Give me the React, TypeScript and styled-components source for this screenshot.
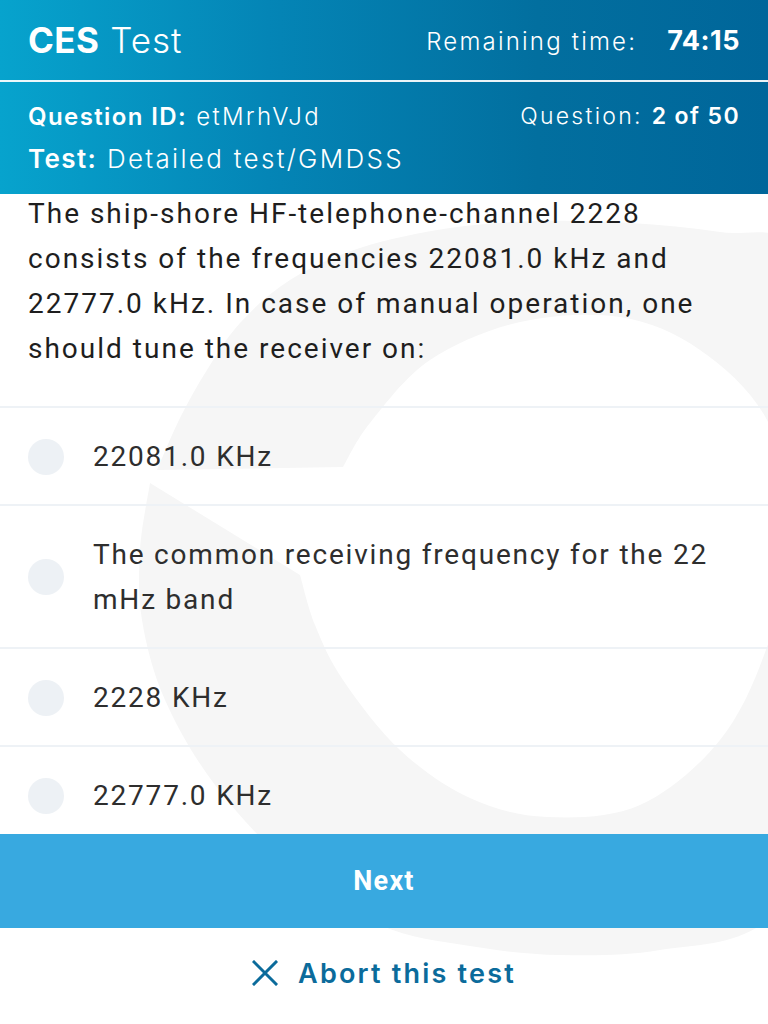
import styled, { createGlobalStyle } from 'styled-components';

const GlobalStyle = createGlobalStyle`
  html, body {
    margin: 0;
    padding: 0;
    background: #ffffff;
  }
  #root {
    height: 100vh;
  }
  * {
    box-sizing: border-box;
  }
`;

const Page = styled.div`
  position: relative;
  display: flex;
  flex-direction: column;
  width: 768px;
  height: 1024px;
  overflow: hidden;
  background: #ffffff;
  font-family: Roboto, "Liberation Sans", sans-serif;
`;

const Watermark = styled.svg`
  position: absolute;
  top: 0;
  left: 0;
  pointer-events: none;
`;

const TopBar = styled.header`
  position: relative;
  z-index: 1;
  background: linear-gradient(90deg, #07a3cd 0%, #0485b6 35%, #026f9f 70%, #00669a 100%);
  color: #ffffff;
  font-family: Inter, "Open Sans", sans-serif;
`;

const TitleRow = styled.div`
  display: flex;
  align-items: center;
  justify-content: space-between;
  height: 82px;
  padding: 0 28px;
  border-bottom: 2px solid rgba(255, 255, 255, 0.92);
`;

const Title = styled.h1`
  margin: 0;
  font-size: 35px;
  font-weight: 300;
  letter-spacing: 1px;

  b {
    font-weight: 700;
    letter-spacing: 0.4px;
  }
`;

const Timer = styled.div`
  display: flex;
  align-items: baseline;
  gap: 30px;
  font-size: 24px;
  font-weight: 300;
  letter-spacing: 2.2px;

  b {
    font-size: 27px;
    font-weight: 700;
    letter-spacing: 0.5px;
  }
`;

const InfoBlock = styled.div`
  display: flex;
  flex-direction: column;
  padding: 13px 28px 15px;
`;

const InfoRow = styled.div`
  display: flex;
  align-items: center;
  justify-content: space-between;
  height: 42px;
`;

const InfoText = styled.span<{ $size: number }>`
  font-size: ${(p) => p.$size}px;
  font-weight: 300;
  letter-spacing: 2.3px;

  b {
    font-weight: 600;
    letter-spacing: 1.4px;
  }
`;

const Body = styled.main`
  position: relative;
  z-index: 1;
  flex: 1;
  overflow: hidden;
`;

const Question = styled.p`
  margin: -3px 0 0;
  padding: 0 28px 35px;
  font-size: 28px;
  line-height: 45px;
  letter-spacing: 2px;
  color: #1e1e1e;
`;

const Option = styled.label`
  display: flex;
  align-items: center;
  gap: 29px;
  padding: 26px 28px 25px;
  border-top: 2px solid #eef2f6;
  cursor: pointer;
`;

const Radio = styled.span`
  flex: none;
  width: 36px;
  height: 36px;
  border-radius: 50%;
  background: #edf1f5;
`;

const OptionText = styled.span`
  font-size: 28px;
  line-height: 45px;
  letter-spacing: 1.8px;
  color: #2e2e2e;
`;

const NextButton = styled.button`
  position: relative;
  z-index: 1;
  flex: none;
  height: 94px;
  border: none;
  background: #38a9e0;
  color: #ffffff;
  font-family: Roboto, "Liberation Sans", sans-serif;
  font-size: 27px;
  font-weight: 700;
  letter-spacing: 1.2px;
  cursor: pointer;
`;

const AbortButton = styled.button`
  position: relative;
  z-index: 1;
  flex: none;
  display: flex;
  align-items: center;
  justify-content: center;
  gap: 20px;
  height: 96px;
  padding: 0 0 6px;
  border: none;
  background: transparent;
  color: #0b6b9b;
  font-family: Inter, "Open Sans", sans-serif;
  font-size: 27px;
  font-weight: 600;
  letter-spacing: 2.2px;
  cursor: pointer;
`;

type Pt = [number, number];

// catmull-rom through the points, as cubic segments
const smooth = (pts: Pt[]) => {
  let d = '';
  for (let i = 0; i < pts.length - 1; i++) {
    const p0 = pts[i - 1] || pts[i];
    const p1 = pts[i];
    const p2 = pts[i + 1];
    const p3 = pts[i + 2] || p2;
    const c1 = [p1[0] + (p2[0] - p0[0]) / 6, p1[1] + (p2[1] - p0[1]) / 6];
    const c2 = [p2[0] - (p3[0] - p1[0]) / 6, p2[1] - (p3[1] - p1[1]) / 6];
    d += ` C ${c1[0]} ${c1[1]} ${c2[0]} ${c2[1]} ${p2[0]} ${p2[1]}`;
  }
  return d;
};

const outer: Pt[] = [
  [157, 470], [180, 418], [207, 370], [240, 323], [290, 280], [360, 248], [450, 228],
  [540, 221], [630, 223], [720, 232], [800, 250], [880, 400], [900, 590], [870, 790],
  [768, 920], [660, 950], [560, 955], [470, 946], [380, 925], [290, 865], [215, 785],
  [165, 700], [142, 620], [140, 550], [150, 483],
];

const inner: Pt[] = [
  [300, 575], [315, 625], [343, 680], [400, 750], [470, 798], [547, 817], [640, 805],
  [720, 740], [767, 647], [795, 530], [767, 420], [700, 350], [620, 317], [520, 322],
  [430, 360], [370, 423], [343, 467],
];

const logoPath = `M ${outer[0][0]} ${outer[0][1]}${smooth(outer)} L ${inner[0][0]} ${inner[0][1]}${smooth(inner)} Z`;

const options = [
  '22081.0 KHz',
  'The common receiving frequency for the 22 mHz band',
  '2228 KHz',
  '22777.0 KHz',
];

function App() {
  return (
    <>
      <GlobalStyle />
      <Page>
        <Watermark width="768" height="1024" viewBox="0 0 768 1024">
          <path d={logoPath} fill="#f6f6f6" />
        </Watermark>

        <TopBar>
          <TitleRow>
            <Title>
              <b>CES</b> Test
            </Title>
            <Timer>
              <span>Remaining time:</span>
              <b>74:15</b>
            </Timer>
          </TitleRow>
          <InfoBlock>
            <InfoRow>
              <InfoText $size={24}>
                <b>Question ID:</b> etMrhVJd
              </InfoText>
              <InfoText $size={23}>
                Question: <b>2 of 50</b>
              </InfoText>
            </InfoRow>
            <InfoRow>
              <InfoText $size={26}>
                <b>Test:</b> Detailed test/GMDSS
              </InfoText>
            </InfoRow>
          </InfoBlock>
        </TopBar>

        <Body>
          <Question>
            The ship-shore HF-telephone-channel 2228 consists of the frequencies 22081.0 kHz and
            22777.0 kHz. In case of manual operation, one should tune the receiver on:
          </Question>
          {options.map((o) => (
            <Option key={o}>
              <Radio />
              <OptionText>{o}</OptionText>
            </Option>
          ))}
        </Body>

        <NextButton>Next</NextButton>
        <AbortButton>
          <svg width="26" height="26" viewBox="0 0 26 26">
            <path d="M2 2 L24 24 M24 2 L2 24" stroke="currentColor" strokeWidth="3" strokeLinecap="square" />
          </svg>
          Abort this test
        </AbortButton>
      </Page>
    </>
  );
}

export default App;
